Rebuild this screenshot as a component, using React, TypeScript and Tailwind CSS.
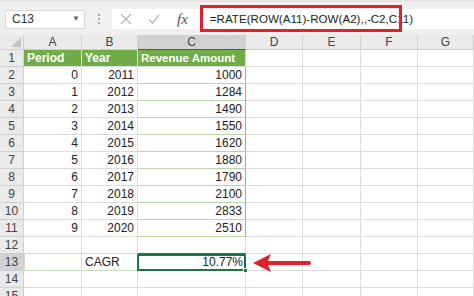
import React from "react";

const cols = ["A", "B", "C", "D", "E", "F", "G"];

const data: [number, number, number][] = [
  [0, 2011, 1000],
  [1, 2012, 1284],
  [2, 2013, 1490],
  [3, 2014, 1550],
  [4, 2015, 1620],
  [5, 2016, 1880],
  [6, 2017, 1790],
  [7, 2018, 2100],
  [8, 2019, 2833],
  [9, 2020, 2510],
];

const grid = "grid grid-cols-[24px_58px_56px_108px_57px_58px_57px_1fr]";

function Cell({
  children,
  className = "",
}: {
  children?: React.ReactNode;
  className?: string;
}) {
  return (
    <div
      className={`h-[17px] border-b border-r border-[#dcdcdc] px-[3px] leading-[16px] ${className}`}
    >
      {children}
    </div>
  );
}

function RowHead({ n, active }: { n: number; active?: boolean }) {
  return (
    <div
      className={`h-[17px] border-b border-r border-[#cfcfcf] text-center leading-[16px] text-[#444] ${
        active ? "bg-[#d2d2d2]" : "bg-[#eaeaea]"
      }`}
    >
      {n}
    </div>
  );
}

export default function App() {
  return (
    <div
      className="relative h-[296px] w-[474px] overflow-hidden bg-white text-[12px] text-[#222]"
      style={{ fontFamily: "'Liberation Sans', Arial, sans-serif" }}
    >
      {/* Formula bar */}
      <div className="h-[35px] border-t-2 border-[#e4e4e4] bg-[#f0f0f0] pt-[7px]">
        <div className="flex h-[20px] items-center">
          <div className="ml-[5px] flex h-[19px] w-[80px] items-center justify-between border border-[#dadada] bg-white pl-[6px] pr-[4px] text-[#333]">
            <span>C13</span>
            <span className="text-[8px] text-[#666]">▼</span>
          </div>
          <div className="ml-[11px] flex w-[5px] flex-col items-center gap-[2px]">
            <span className="h-[2px] w-[2px] bg-[#aaa]" />
            <span className="h-[2px] w-[2px] bg-[#aaa]" />
            <span className="h-[2px] w-[2px] bg-[#aaa]" />
          </div>
          <div className="ml-[11px] flex h-[20px] flex-1 items-center bg-white">
            <svg width="14" height="14" viewBox="0 0 14 14" className="ml-[7px]">
              <path d="M2 2L12 12M12 2L2 12" stroke="#b5b5b5" strokeWidth="1.2" />
            </svg>
            <svg width="14" height="14" viewBox="0 0 14 14" className="ml-[14px]">
              <path d="M2 7.5L5.5 11L12 3" stroke="#b5b5b5" strokeWidth="1.2" fill="none" />
            </svg>
            <span
              className="ml-[16px] text-[15px] italic text-[#555]"
              style={{ fontFamily: "'Liberation Serif', serif" }}
            >
              fx
            </span>
            <span className="ml-[22px] text-[11.6px] text-[#222]">
              =RATE(ROW(A11)-ROW(A2),,-C2,C11)
            </span>
          </div>
        </div>
      </div>

      {/* Red highlight box */}
      <div className="absolute left-[200px] top-[5px] h-[27px] w-[202px] border-[3px] border-[#e0212b]" />

      {/* Column headers */}
      <div className={`${grid} h-[15px] bg-[#eaeaea] text-[12px] text-[#444]`}>
        <div className="relative border-b border-r border-[#cfcfcf]">
          <svg width="10" height="10" className="absolute bottom-[2px] right-[2px]">
            <path d="M10 0L10 10L0 10Z" fill="#c4c4c4" />
          </svg>
        </div>
        {cols.map((c) => (
          <div
            key={c}
            className={`border-b border-r border-[#cfcfcf] text-center leading-[14px] ${
              c === "C" ? "bg-[#d2d2d2] border-b-[#217346]" : ""
            }`}
          >
            {c}
          </div>
        ))}
      </div>

      {/* Rows */}
      <div>
        {/* Row 1: header */}
        <div className={grid}>
          <RowHead n={1} />
          <Cell className="border-[#8fbf6e] bg-[#70ad47] font-bold text-white">Period</Cell>
          <Cell className="border-[#8fbf6e] bg-[#70ad47] font-bold text-white">Year</Cell>
          <Cell className="border-[#8fbf6e] bg-[#70ad47] text-[11.5px] font-bold text-white">
            Revenue Amount
          </Cell>
          <Cell />
          <Cell />
          <Cell />
          <Cell />
        </div>

        {data.map(([p, y, r], i) => (
          <div key={i} className={grid}>
            <RowHead n={i + 2} />
            <Cell className="border-[#b7d6a3] text-right">{p}</Cell>
            <Cell className="border-[#b7d6a3] text-right">{y}</Cell>
            <Cell className="border-b-[#b7d6a3] border-r-[#8fbf6e] text-right">{r}</Cell>
            <Cell />
            <Cell />
            <Cell />
            <Cell />
          </div>
        ))}

        {/* Row 12 */}
        <div className={grid}>
          <RowHead n={12} />
          <Cell className="border-b-[#c9e0ba]" />
          <Cell className="border-b-[#c9e0ba]" />
          <Cell className="border-b-[#217346]" />
          <Cell />
          <Cell />
          <Cell />
          <Cell />
        </div>

        {/* Row 13 */}
        <div className={grid}>
          <RowHead n={13} active />
          <Cell className="border-b-[#c9e0ba] border-l border-l-[#c9e0ba]" />
          <Cell className="border-b-[#c9e0ba]">CAGR</Cell>
          <div className="relative -ml-px h-[17px] border-2 border-[#217346] pr-[1px] text-right leading-[13px]">
            10.77%
            <span className="absolute -bottom-[4px] -right-[4px] h-[5px] w-[5px] border border-white bg-[#217346]" />
          </div>
          <Cell />
          <Cell />
          <Cell />
          <Cell />
        </div>

        {[14, 15].map((n) => (
          <div key={n} className={grid}>
            <RowHead n={n} />
            {cols.map((c) => (
              <Cell key={c} />
            ))}
          </div>
        ))}
      </div>

      {/* Arrow annotation */}
      <svg
        width="64"
        height="24"
        viewBox="0 0 64 24"
        className="absolute left-[250px] top-[251px]"
      >
        <path d="M3 12L21 3L18 10H59a2 2 0 0 1 0 4H18L21 21Z" fill="#e0212b" />
      </svg>
    </div>
  );
}
